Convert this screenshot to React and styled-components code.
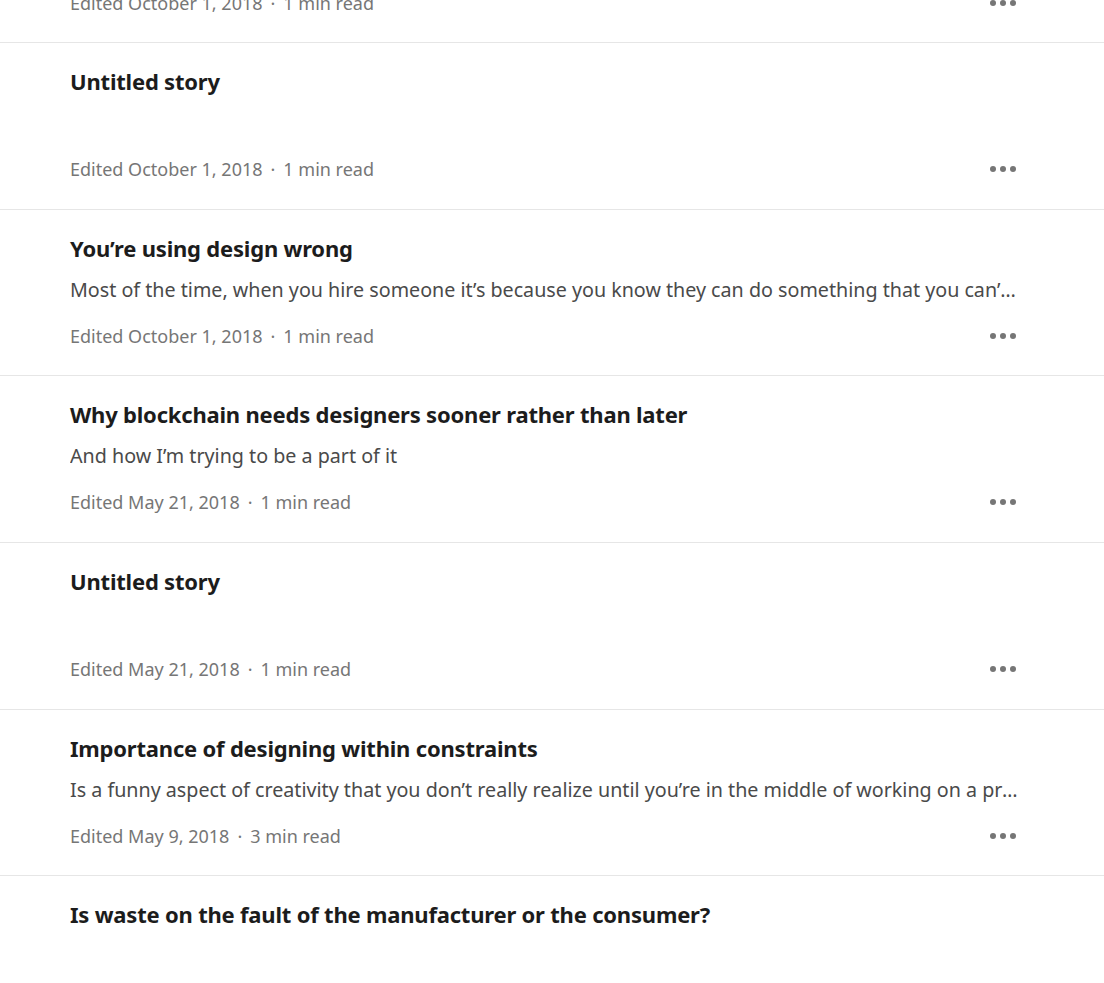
import React from "react";
import styled, { createGlobalStyle } from "styled-components";

const GlobalStyle = createGlobalStyle`
  html, body {
    margin: 0;
    padding: 0;
    background: #fff;
    overflow: hidden;
  }
  body {
    font-family: "Noto Sans", "Open Sans", sans-serif;
    -webkit-font-smoothing: antialiased;
  }
`;

const List = styled.div`
  margin-top: -123.4px;
`;

const Row = styled.div`
  box-sizing: border-box;
  height: 166.6px;
  padding: 22px 86px 0 70px;
  border-bottom: 1px solid #e6e6e6;
  display: flex;
  flex-direction: column;
`;

const Title = styled.h3`
  margin: 0;
  font-size: 22px;
  line-height: 32px;
  font-weight: 700;
  color: #1c1c1c;
  letter-spacing: -0.2px;
`;

const Desc = styled.p`
  margin: 12px 0 0;
  min-height: 28px;
  font-size: 19.7px;
  line-height: 28px;
  color: #4a4a4a;
  white-space: nowrap;
  overflow: hidden;
  text-overflow: ellipsis;
`;

const Meta = styled.div`
  margin-top: 20px;
  display: flex;
  align-items: center;
  justify-content: space-between;
  font-size: 18px;
  line-height: 24px;
  color: #767676;
`;

const Dot = styled.span`
  padding: 0 8px;
`;

const MoreButton = styled.button`
  display: flex;
  gap: 4px;
  margin-right: 2px;
  padding: 0;
  border: none;
  background: none;
  cursor: pointer;
  span {
    width: 6px;
    height: 6px;
    border-radius: 50%;
    background: #767676;
  }
`;

const stories = [
  { title: "Untitled story", desc: "", date: "Edited October 1, 2018", read: "1 min read" },
  { title: "Untitled story", desc: "", date: "Edited October 1, 2018", read: "1 min read" },
  {
    title: "You’re using design wrong",
    desc: "Most of the time, when you hire someone it’s because you know they can do something that you can’t, and that’s exactly why",
    date: "Edited October 1, 2018",
    read: "1 min read",
  },
  {
    title: "Why blockchain needs designers sooner rather than later",
    desc: "And how I’m trying to be a part of it",
    date: "Edited May 21, 2018",
    read: "1 min read",
  },
  { title: "Untitled story", desc: "", date: "Edited May 21, 2018", read: "1 min read" },
  {
    title: "Importance of designing within constraints",
    desc: "Is a funny aspect of creativity that you don’t really realize until you’re in the middle of working on a project",
    date: "Edited May 9, 2018",
    read: "3 min read",
  },
  {
    title: "Is waste on the fault of the manufacturer or the consumer?",
    desc: "",
    date: "Edited May 9, 2018",
    read: "2 min read",
  },
];

const StoryRow = ({ title, desc, date, read }) => (
  <Row>
    <Title>{title}</Title>
    <Desc>{desc}</Desc>
    <Meta>
      <div>
        {date}
        <Dot>·</Dot>
        {read}
      </div>
      <MoreButton aria-label="More">
        <span />
        <span />
        <span />
      </MoreButton>
    </Meta>
  </Row>
);

export default function App() {
  return (
    <>
      <GlobalStyle />
      <List>
        {stories.map((s, i) => (
          <StoryRow key={i} {...s} />
        ))}
      </List>
    </>
  );
}
